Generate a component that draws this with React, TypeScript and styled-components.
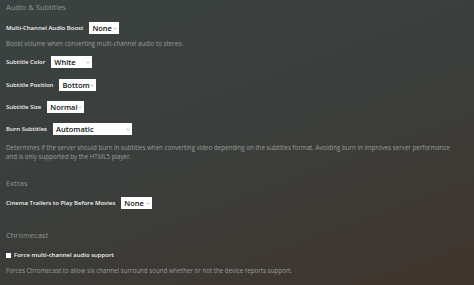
import styled, { createGlobalStyle } from "styled-components"

const GlobalStyle = createGlobalStyle`
	html, body {
		margin: 0;
		padding: 0;
	}
	body {
		width: 474px;
		height: 285px;
		overflow: hidden;
		font-family: "Open Sans", "Liberation Sans", sans-serif;
		background: linear-gradient(160deg, #3a4241 0%, #3b3e3b 50%, #40342d 100%);
	}
`

type Gap = { gap?: number }

const Page = styled.div`
	width: 474px;
	height: 285px;
	box-sizing: border-box;
	padding: 1px 6px 0;
`

const SectionTitle = styled.h2<Gap>`
	margin: 0;
	font-size: 7.5px;
	font-weight: 400;
	line-height: 12px;
	color: #8e9493;
	margin-bottom: ${(p) => p.gap ?? 8}px;
`

const Row = styled.div<Gap>`
	display: flex;
	align-items: center;
	gap: 6px;
	height: 12px;
	margin-bottom: ${(p) => p.gap ?? 10}px;
`

const Label = styled.label`
	font-size: 6px;
	font-weight: 600;
	color: #f2f2f2;
	white-space: nowrap;
`

const SelectBox = styled.div<{ $w: number }>`
	display: flex;
	align-items: center;
	justify-content: space-between;
	box-sizing: border-box;
	width: ${(p) => p.$w}px;
	height: 12px;
	padding: 0 2px 0 3px;
	background: #ffffff;
	color: #111;
	font-size: 7.5px;
	font-weight: 600;
	line-height: 12px;
`

const Chevron = styled.svg`
	width: 4px;
	height: 3px;
	flex-shrink: 0;
`

const Help = styled.p<Gap>`
	margin: 0;
	max-width: 446px;
	font-size: 6.2px;
	line-height: 9px;
	color: #9a9e9c;
	margin-bottom: ${(p) => p.gap ?? 10}px;
`

const CheckRow = styled.div<Gap>`
	display: flex;
	align-items: center;
	gap: 3px;
	height: 10px;
	margin-bottom: ${(p) => p.gap ?? 6}px;
`

const Box = styled.span`
	width: 5px;
	height: 5px;
	background: #fff;
`

const Select = ({ value, width }: { value: string; width: number }) => (
	<SelectBox $w={width}>
		<span>{value}</span>
		<Chevron viewBox="0 0 4 3">
			<path d="M0.5 0.8 L2 2.2 L3.5 0.8" fill="none" stroke="#999" strokeWidth="0.7" />
		</Chevron>
	</SelectBox>
)

const App = () => {
	return (
		<>
			<GlobalStyle />
			<Page>
				<SectionTitle gap={9}>Audio &amp; Subtitles</SectionTitle>

				<Row gap={4.5}>
					<Label>Multi-Channel Audio Boost</Label>
					<Select value="None" width={30} />
				</Row>
				<Help gap={8.5}>Boost volume when converting multi-channel audio to stereo.</Help>

				<Row gap={11}>
					<Label>Subtitle Color</Label>
					<Select value="White" width={41} />
				</Row>

				<Row gap={10}>
					<Label>Subtitle Position</Label>
					<Select value="Bottom" width={37} />
				</Row>

				<Row gap={10}>
					<Label>Subtitle Size</Label>
					<Select value="Normal" width={37} />
				</Row>

				<Row gap={7.5}>
					<Label>Burn Subtitles</Label>
					<Select value="Automatic" width={79} />
				</Row>
				<Help gap={16.5}>
					Determines if the server should burn in subtitles when converting video depending on the
					subtitles format. Avoiding burn in improves server performance and is only supported by the
					HTML5 player.
				</Help>

				<SectionTitle gap={8}>Extras</SectionTitle>
				<Row gap={20}>
					<Label>Cinema Trailers to Play Before Movies</Label>
					<Select value="None" width={31} />
				</Row>

				<SectionTitle gap={9}>Chromecast</SectionTitle>
				<CheckRow gap={5.5}>
					<Box />
					<Label>Force multi-channel audio support</Label>
				</CheckRow>
				<Help>Forces Chromecast to allow six channel surround sound whether or not the device reports support.</Help>
			</Page>
		</>
	)
}

export default App
